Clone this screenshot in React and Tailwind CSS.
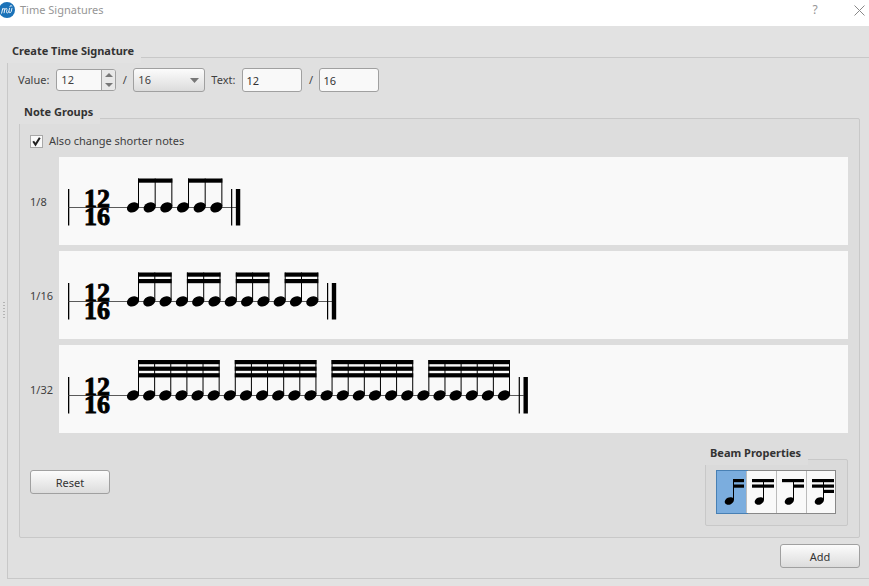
import { useState } from 'react'

const rows = [
  { label: '1/8', groups: 2, perGroup: 3, spacing: 16.67, beams: [21.5] },
  { label: '1/16', groups: 4, perGroup: 3, spacing: 16.3, beams: [21.5, 28] },
  { label: '1/32', groups: 4, perGroup: 6, spacing: 16.13, beams: [15, 21.6, 28.2] },
]

// x, y and width of each beam inside a cell
const beamModes = [
  { name: 'Start beam', beams: [[16, 9, 11], [16, 14.5, 11]] },
  { name: 'Middle beam', beams: [[5, 9, 22], [5, 14.5, 22]] },
  { name: 'Start 1/32 subbeam', beams: [[5, 9, 22], [16, 14.5, 11]] },
  { name: 'Start 1/64 subbeam', beams: [[5, 9, 22], [5, 14.5, 22], [16, 19.8, 11]] },
]

const buttonClass =
  'h-6 w-20 rounded-[3px] border border-[#a0a0a0] bg-linear-to-b from-[#fcfcfc] to-[#dcdcdc] pt-px text-[11px] leading-4 text-[#333]'
const fieldClass =
  'h-6 w-[60px] rounded-[3px] border border-[#a0a0a0] bg-[#f9f9f9] px-[3px] text-[11px] leading-4 text-[#333] outline-none'
const titleClass = 'relative -mt-4 -ml-px h-[21px] w-fit pt-px pr-[7px] pl-[5px] font-bold text-[#333]'

const Logo = () => (
  <svg width="16" height="16" viewBox="0 0 16 16" className="-ml-px shrink-0" aria-hidden="true">
    <circle cx="8" cy="8" r="8" fill="#1b72b8" />
    <path
      d="M2.600 11.200 3.700 6.600M3.500 7.800C4.200 6.200 6 5.800 5.700 7.600L5.100 10.800M5.600 7.800C6.400 6.200 8.300 5.800 8 7.600L7.500 9.800C7.300 11.300 9.300 11.200 9.800 9.700L10.500 6.400M9.800 9.700C9.900 11.300 11.800 11 12.200 9.600L12.900 6.400M10.800 4.800C11 3.600 12.200 3.200 13 4.200"
      fill="none"
      stroke="#fff"
      strokeWidth="0.9"
      strokeLinecap="round"
    />
  </svg>
)

const NoteHead = ({ cx, cy, rx = 6.4, ry = 4.8 }) => (
  <ellipse cx={cx} cy={cy} rx={rx} ry={ry} transform={`rotate(-25 ${cx} ${cy})`} />
)

const Staff = ({ groups, perGroup, spacing, beams, label }) => {
  const stems = Array.from({ length: groups * perGroup }, (_, i) => 79.5 + i * spacing)
  const end = stems[stems.length - 1] + 9.2

  return (
    <svg width="500" height="88" viewBox="0 0 500 88" className="block max-w-full" role="img" aria-label={`${label} note groups`}>
      <rect x="9" y="32" width="1.3" height="36.5" />
      <rect x="9" y="50" width={end - 4} height="0.8" fill="#333" />
      <g fontFamily="'Liberation Serif', serif" fontWeight="700" fontSize="26" stroke="#000" strokeWidth="0.9" textAnchor="middle">
        <text x="38" y="50">12</text>
        <text x="38" y="68">16</text>
      </g>
      {stems.map((x, i) => (
        <g key={i}>
          <NoteHead cx={x - 5.5} cy={50.4} />
          <rect x={x - 0.5} y={beams[0]} width="1" height={49 - beams[0]} />
        </g>
      ))}
      {Array.from({ length: groups }, (_, g) =>
        beams.map((y) => (
          <rect key={`${g}-${y}`} x={stems[g * perGroup] - 0.5} y={y} width={(perGroup - 1) * spacing + 1} height="4.2" />
        ))
      )}
      <rect x={end} y="32" width="1.2" height="36.5" />
      <rect x={end + 4.8} y="32" width="4.4" height="36.5" />
    </svg>
  )
}

const App = () => {
  const [value, setValue] = useState(12)
  const [upper, setUpper] = useState('12')
  const [lower, setLower] = useState('16')
  const [denominator, setDenominator] = useState('16')
  const [shorter, setShorter] = useState(true)
  const [mode, setMode] = useState(0)

  return (
    <div className="min-h-screen overflow-hidden bg-[#e2e2e2] font-['Noto_Sans',sans-serif] text-[11px] leading-4 text-[#404040]">
      <header className="flex h-[26px] items-start bg-white pt-0.5 text-[#969696]">
        <Logo />
        <h1 className="ml-[5px] grow">Time Signatures</h1>
        <button type="button" className="w-5 text-center text-[12px]">?</button>
        <button type="button" aria-label="Close" className="ml-6 flex h-4 w-5 items-center justify-center">
          <svg width="11" height="11" viewBox="0 0 11 11" stroke="#888" fill="none">
            <path d="M.5.5l10 10M10.5.5l-10 10" />
          </svg>
        </button>
      </header>

      <main className="relative pt-[31px] pl-[7px]">
        {/* Dock handle */}
        <div className="absolute top-[276px] left-[3px] flex flex-col gap-0.5">
          {[0, 1, 2, 3, 4, 5].map((i) => (
            <span key={i} className="block h-px w-0.5 bg-[#b4b4b4]"></span>
          ))}
        </div>

        <section className="border-y border-l border-[#c8c8c8] bg-[#e0e0e0] pb-2.5">
          <h2 className={`${titleClass} bg-[#e2e2e2]`}>Create Time Signature</h2>

          <div className="mt-[5px] flex items-center pl-2.5">
            <label htmlFor="value">Value:</label>
            <div className="ml-[7px] flex h-[22px] w-[60px] overflow-hidden rounded-[3px] border border-[#a0a0a0] bg-[#f9f9f9]">
              <input
                id="value"
                type="text"
                inputMode="numeric"
                value={value}
                onChange={(e) => setValue(Number(e.target.value) || 0)}
                className="w-full min-w-0 px-1 outline-none"
              />
              <div className="flex w-[14px] shrink-0 flex-col border-l border-[#a0a0a0] bg-[#e8e8e8]">
                <button type="button" aria-label="Increase" onClick={() => setValue(value + 1)} className="flex flex-1 items-center justify-center">
                  <svg width="8" height="4" viewBox="0 0 8 4" fill="#777"><path d="M0 4l4-4 4 4z" /></svg>
                </button>
                <button type="button" aria-label="Decrease" onClick={() => setValue(value - 1)} className="flex flex-1 items-center justify-center">
                  <svg width="8" height="4" viewBox="0 0 8 4" fill="#777"><path d="M0 0l4 4 4-4z" /></svg>
                </button>
              </div>
            </div>
            <span className="w-[17px] text-center">/</span>
            <div className="relative">
              <select
                aria-label="Denominator"
                value={denominator}
                onChange={(e) => setDenominator(e.target.value)}
                className="block h-6 w-[72px] appearance-none rounded-[3px] border border-[#a0a0a0] bg-linear-to-b from-[#fcfcfc] to-[#dcdcdc] px-1 text-[11px] leading-4 outline-none"
              >
                {['1', '2', '4', '8', '16', '32', '64', '128'].map((n) => (
                  <option key={n}>{n}</option>
                ))}
              </select>
              <svg width="9" height="5" viewBox="0 0 9 5" fill="#777" className="pointer-events-none absolute top-2.5 right-1.5"><path d="M0 0h9L4.500 5z" /></svg>
            </div>
            <label htmlFor="upper" className="ml-1.5">Text:</label>
            <input id="upper" type="text" value={upper} onChange={(e) => setUpper(e.target.value)} className={`${fieldClass} ml-[7px]`} />
            <span className="w-[17px] text-center">/</span>
            <input aria-label="Lower text" type="text" value={lower} onChange={(e) => setLower(e.target.value)} className={fieldClass} />
          </div>

          <section className="mt-[26px] mr-[9px] ml-[11px] rounded-[2px] border border-[#c8c8c8] bg-[#ddd] pb-[11px]">
            <h2 className={`${titleClass} bg-[#e0e0e0]`}>Note Groups</h2>

            <div className="mt-[9px] pr-[11px] pl-2.5">
              <label className="flex w-fit items-center gap-1.5">
                <span className="relative block size-[13px]">
                  <input
                    type="checkbox"
                    checked={shorter}
                    onChange={(e) => setShorter(e.target.checked)}
                    className="peer block size-[13px] appearance-none border border-[#a8a8a8] bg-[#f9f9f9]"
                  />
                  <svg width="13" height="13" viewBox="0 0 13 13" className="pointer-events-none absolute inset-0 hidden peer-checked:block">
                    <path d="M3.200 6.200L5.500 9.600 9.800 2.800" fill="none" stroke="#222" strokeWidth="2" />
                  </svg>
                </span>
                Also change shorter notes
              </label>

              <div className="mt-2 flex flex-col gap-1.5">
                {rows.map((row) => (
                  <div key={row.label} className="flex items-center">
                    <span className="w-[29px] shrink-0 pt-px">{row.label}</span>
                    <div className="min-w-0 grow bg-[#f9f9f9]">
                      <Staff {...row} />
                    </div>
                  </div>
                ))}
              </div>

              <div className="mt-[26px] flex items-start justify-between">
                <button type="button" className={`${buttonClass} mt-[11px]`}>Reset</button>
                <section className="rounded-[2px] border border-[#c8c8c8] bg-[#dadada] pb-[11px]">
                  <h2 className={`${titleClass} bg-[#ddd]`}>Beam Properties</h2>
                  <div className="mr-[11px] ml-2.5 mt-[5px] flex border border-[#888]">
                    {beamModes.map((item, i) => (
                      <button
                        key={item.name}
                        type="button"
                        aria-label={item.name}
                        aria-pressed={mode === i}
                        onClick={() => setMode(i)}
                        className={`h-[42px] w-[30px] border-r border-[#bbb] last:w-7 last:border-r-0 ${mode === i ? 'bg-[#7badde] outline outline-[#4880b4]' : 'bg-[#f9f9f9]'}`}
                      >
                        <svg width="28" height="42" viewBox="0 1 28 42" className="block">
                          <NoteHead cx={12.3} cy={31} rx={4.8} ry={3.6} />
                          <rect x="16" y="9" width="1" height="21" />
                          {item.beams.map(([x, y, w]) => (
                            <rect key={y} x={x} y={y} width={w} height="3.200" />
                          ))}
                        </svg>
                      </button>
                    ))}
                  </div>
                </section>
              </div>
            </div>
          </section>

          <div className="mt-1.5 mr-[9px] flex justify-end">
            <button type="button" className={buttonClass}>Add</button>
          </div>
        </section>
      </main>
    </div>
  )
}

export default App
